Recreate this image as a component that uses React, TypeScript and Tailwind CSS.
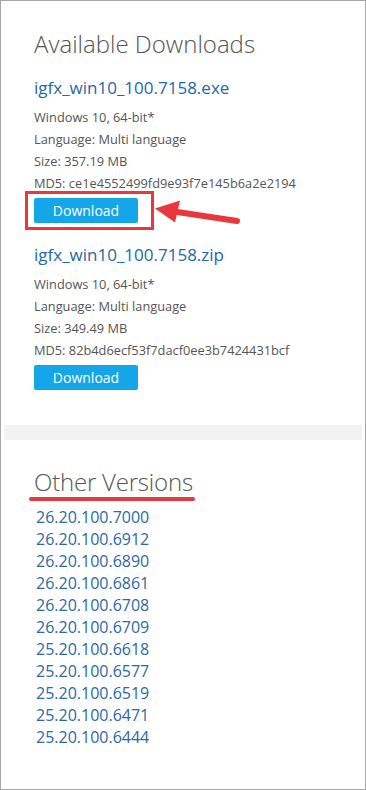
const files = [
  {
    name: "igfx_win10_100.7158.exe",
    os: "Windows 10, 64-bit*",
    lang: "Multi language",
    size: "357.19 MB",
    md5: "ce1e4552499fd9e93f7e145b6a2e2194",
    marked: true,
  },
  {
    name: "igfx_win10_100.7158.zip",
    os: "Windows 10, 64-bit*",
    lang: "Multi language",
    size: "349.49 MB",
    md5: "82b4d6ecf53f7dacf0ee3b7424431bcf",
    marked: false,
  },
];

const versions = [
  "26.20.100.7000",
  "26.20.100.6912",
  "26.20.100.6890",
  "26.20.100.6861",
  "26.20.100.6708",
  "26.20.100.6709",
  "25.20.100.6618",
  "25.20.100.6577",
  "25.20.100.6519",
  "25.20.100.6471",
  "25.20.100.6444",
];

function DownloadButton({ marked }: { marked: boolean }) {
  return (
    <div className="relative mt-[4px] w-[104px]">
      <button className="block w-[104px] h-[25px] rounded-[2px] bg-[#14a6e8] text-white text-[14px] leading-[25px]">
        Download
      </button>
      {marked && (
        <>
          {/* annotation box + arrow */}
          <div className="absolute -left-[9px] -top-[7px] w-[129px] h-[39px] border-[3px] border-[#e3393f]" />
          <svg className="absolute left-0 top-0 overflow-visible" width="210" height="30" viewBox="0 0 210 30">
            <line x1="140" y1="13.5" x2="203" y2="23" stroke="#e8383d" strokeWidth="6" strokeLinecap="round" />
            <polygon points="121,10.5 146,2.5 141,24.5" fill="#e8383d" />
          </svg>
        </>
      )}
    </div>
  );
}

export default function App() {
  return (
    <div
      className="w-[366px] h-[790px] bg-white border border-[#a6a6a6] flex flex-col overflow-hidden"
      style={{ fontFamily: '"Open Sans", "Noto Sans", sans-serif' }}
    >
      <section className="px-[33px] pt-[27px] pb-[35px]">
        <h2 className="text-[24px] leading-[32px] font-light text-[#555555]">Available Downloads</h2>
        {files.map((f, i) => (
          <div key={f.name} className={i === 0 ? "mt-[16px]" : "mt-[20px]"}>
            <a className="block text-[17px] leading-[24px] text-[#2268ab]">{f.name}</a>
            <div className="mt-[6px] text-[12.8px] leading-[22px] text-[#555555]">
              <p>{f.os}</p>
              <p>Language: {f.lang}</p>
              <p>Size: {f.size}</p>
              <p>MD5: {f.md5}</p>
            </div>
            <DownloadButton marked={f.marked} />
          </div>
        ))}
      </section>

      <div className="mx-[3px] h-[15px] bg-[#f2f2f2]" />

      <section className="px-[33px] pt-[26px]">
        <div className="relative">
          <h2 className="text-[24px] leading-[32px] font-light text-[#555555] tracking-[-0.2px]">Other Versions</h2>
          <div className="absolute -left-[5px] w-[166px] top-[31px] h-[4px] rounded-full bg-[#e3393f]" />
        </div>
        <ul className="mt-[8px] pl-[2px]">
          {versions.map((v) => (
            <li key={v} className="text-[16px] leading-[22px] text-[#2a69a6]">
              {v}
            </li>
          ))}
        </ul>
      </section>
    </div>
  );
}
